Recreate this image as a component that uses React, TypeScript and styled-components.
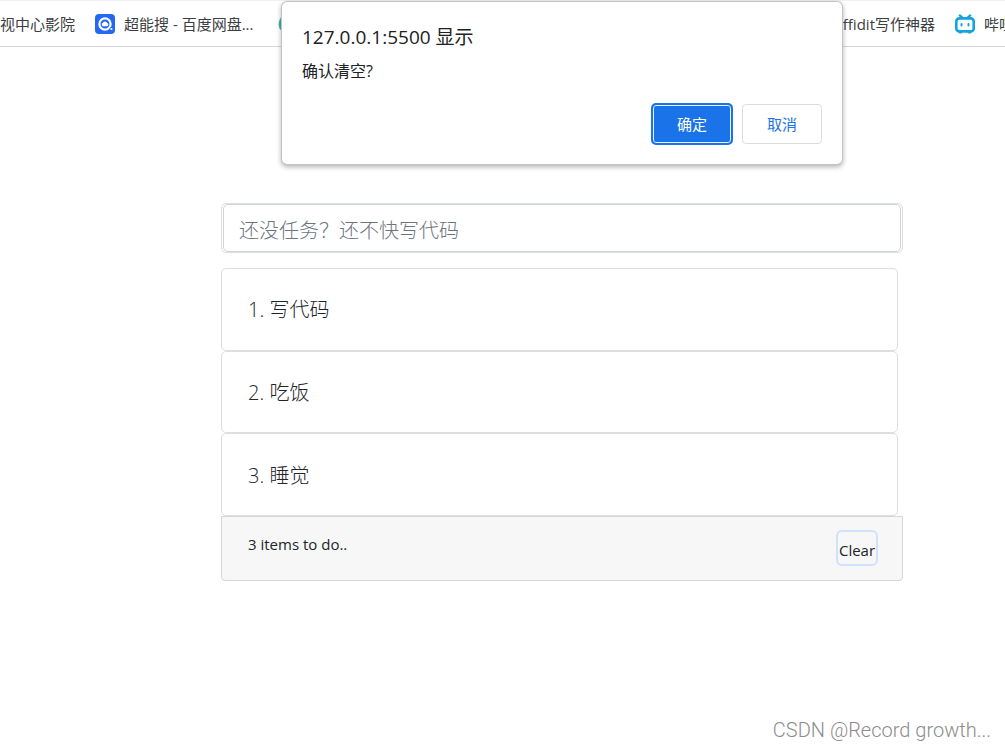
import React from "react";
import styled, { createGlobalStyle } from "styled-components";

const GlobalStyle = createGlobalStyle`
  *, *::before, *::after { box-sizing: border-box; }
  body {
    margin: 0;
    background: #fff;
    color: #212529;
    font-family: "Open Sans", "Noto Sans CJK SC", sans-serif;
    font-size: 16px;
    line-height: 24px;
  }
`;

const Page = styled.div`
  position: relative;
  min-height: 100vh;
  overflow: hidden;
`;

const BookmarkBar = styled.nav`
  display: flex;
  align-items: center;
  gap: 20px;
  height: 47px;
  border-top: 1px solid #f1f1f1;
  border-bottom: 1px solid #d5d7da;
  overflow: hidden;
`;

const Bookmark = styled.a<{ $end?: boolean; $clipped?: boolean }>`
  display: flex;
  flex: none;
  align-items: center;
  gap: 9px;
  width: ${(p) => (p.$clipped ? "50px" : "auto")};
  margin-left: ${(p) => (p.$end ? "auto" : "0")};
  color: #3c4043;
  font-size: 15px;
  white-space: nowrap;
  text-decoration: none;
  overflow: hidden;

  svg { flex: none; }
`;

const BookmarkLabel = styled.span`
  min-width: 134px;
`;

const DialogLayer = styled.div`
  position: absolute;
  inset: 0 0 auto 0;
  display: flex;
  justify-content: center;
  padding: 2px 102px 0 221px;
`;

const Dialog = styled.section`
  width: 560px;
  padding: 21px 20px 20px;
  border-radius: 5px;
  background: #fff;
  color: #202124;
  box-shadow: 0 0 0 1px #c4c4c4, 0 2px 5px 1px rgba(0, 0, 0, 0.3);
`;

const DialogTitle = styled.h1`
  margin: 0;
  font-size: 19px;
  font-weight: 400;
  line-height: 28px;
`;

const DialogText = styled.p`
  margin: 8px 0 21px;
`;

const DialogActions = styled.div`
  display: flex;
  justify-content: flex-end;
  gap: 10px;
`;

const DialogButton = styled.button<{ $primary?: boolean }>`
  width: 80px;
  height: 40px;
  padding: 0;
  border: 1px solid ${(p) => (p.$primary ? "#1a73e8" : "#dadce0")};
  border-radius: 4px;
  background: ${(p) => (p.$primary ? "#1a73e8" : "#fff")};
  color: ${(p) => (p.$primary ? "#fff" : "#1a73e8")};
  box-shadow: ${(p) => (p.$primary ? "0 0 0 1px #1a73e8, inset 0 0 0 1px #e8f1fd" : "none")};
  font: inherit;
  font-size: 15px;
`;

const Main = styled.main`
  margin: 156px 102px 0 221px;
`;

const InputCard = styled.div`
  padding: 0 1px;
  border: 1px solid #dcdee0;
  border-radius: 5px;
`;

const TaskInput = styled.input`
  display: block;
  width: 100%;
  height: 48px;
  padding: 4px 15px 0;
  border: 1px solid #ced4da;
  border-radius: 5px;
  color: #212529;
  font: inherit;
  font-size: 20px;
  font-weight: 300;

  &::placeholder { color: #6c757d; opacity: 1; }
`;

const TaskList = styled.ul`
  display: grid;
  grid-auto-rows: 1fr;
  min-height: 248px;
  margin: 15px 5px 0 0;
  padding: 0;
  list-style: none;
`;

const Task = styled.li`
  display: flex;
  align-items: center;
  padding: 2px 26px 0;
  border: 1px solid #dedede;
  border-radius: 5px;
  font-size: 20px;
  font-weight: 300;
`;

const Footer = styled.footer`
  display: flex;
  justify-content: space-between;
  align-items: flex-start;
  padding: 13px 24px 14px 26px;
  border: 1px solid #d6d6d6;
  border-radius: 0 0 4px 4px;
  background: #f7f7f7;
  font-size: 15px;
`;

const Count = styled.span`
  padding-top: 2px;
`;

const ClearButton = styled.button`
  width: 42px;
  height: 36px;
  padding: 4px 0 0;
  border: 2px solid #cfe2f9;
  border-radius: 6px;
  background: #f7f7f7;
  color: #212529;
  font: inherit;
`;

const Watermark = styled.div`
  position: absolute;
  right: 14px;
  bottom: 7px;
  color: #8c8c8c;
  font-family: Roboto, sans-serif;
  font-size: 20px;
  font-weight: 300;
`;

const DiskIcon = () => (
  <svg width="20" height="20" viewBox="0 0 20 20" aria-hidden="true">
    <rect width="20" height="20" rx="4" fill="#2468f2" />
    <circle cx="10" cy="10" r="5.6" fill="none" stroke="#fff" strokeWidth="2.2" />
    <path d="M8.1 12.2a1.6 1.6 0 0 1-.3-3.1 2.3 2.3 0 0 1 4.4 0 1.6 1.6 0 0 1-.3 3.1z" fill="#fff" />
    <circle cx="16.2" cy="14.8" r="1.7" fill="#2468f2" />
    <circle cx="16.4" cy="15" r="1.1" fill="#fff" />
  </svg>
);

const GreenIcon = () => (
  <svg width="20" height="20" viewBox="0 0 20 20" aria-hidden="true">
    <circle cx="10" cy="10" r="9.5" fill="#3cb69c" />
  </svg>
);

const TvIcon = () => (
  <svg width="20" height="20" viewBox="0 0 20 20" fill="none" stroke="#12a5dc" strokeLinecap="round" aria-hidden="true">
    <rect x="1.3" y="4.4" width="17.4" height="13" rx="3" strokeWidth="2.6" />
    <path d="M4.8 1.4l2.6 2.4M15.2 1.4l-2.6 2.4" strokeWidth="2.2" />
    <path d="M6.5 10v1.6M13.5 10v1.6" strokeWidth="2" />
    <path d="M4.5 18.6h2M13.5 18.6h2" strokeWidth="1.6" />
  </svg>
);

const tasks = ["写代码", "吃饭", "睡觉"];

export default function App() {
  return (
    <Page>
      <GlobalStyle />
      <BookmarkBar aria-label="书签">
        <Bookmark href="#">视中心影院</Bookmark>
        <Bookmark href="#">
          <DiskIcon />
          <BookmarkLabel>超能搜 - 百度网盘...</BookmarkLabel>
        </Bookmark>
        <Bookmark href="#" aria-label="书签">
          <GreenIcon />
        </Bookmark>
        <Bookmark href="#" $end>
          Effidit写作神器
        </Bookmark>
        <Bookmark href="#" $clipped>
          <TvIcon />
          哔哩
        </Bookmark>
      </BookmarkBar>

      <Main>
        <InputCard>
          <TaskInput type="text" aria-label="任务" placeholder="还没任务？还不快写代码" />
        </InputCard>
        <TaskList>
          {tasks.map((task, i) => (
            <Task key={task}>
              {i + 1}. {task}
            </Task>
          ))}
        </TaskList>
        <Footer>
          <Count>{tasks.length} items to do..</Count>
          <ClearButton type="button">Clear</ClearButton>
        </Footer>
      </Main>

      <DialogLayer>
        <Dialog role="alertdialog" aria-labelledby="dialog-title" aria-describedby="dialog-text">
          <DialogTitle id="dialog-title">127.0.0.1:5500 显示</DialogTitle>
          <DialogText id="dialog-text">确认清空?</DialogText>
          <DialogActions>
            <DialogButton type="button" $primary>
              确定
            </DialogButton>
            <DialogButton type="button">取消</DialogButton>
          </DialogActions>
        </Dialog>
      </DialogLayer>

      <Watermark>CSDN @Record growth...</Watermark>
    </Page>
  );
}
